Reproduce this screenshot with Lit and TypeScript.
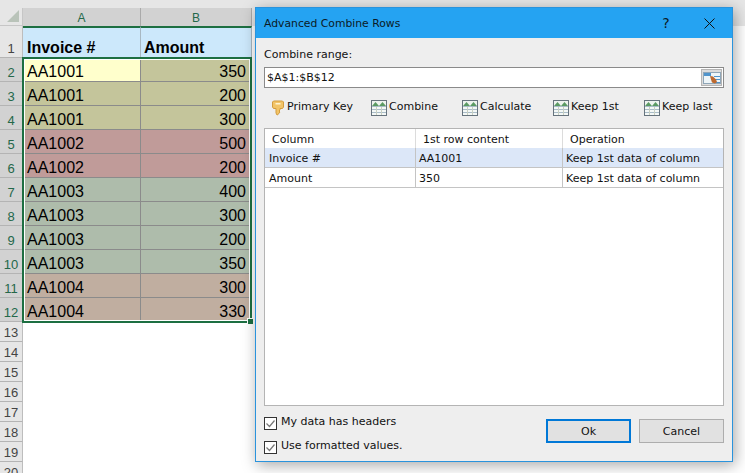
import { LitElement, html, css, svg } from 'lit';
import { customElement } from 'lit/decorators.js';

const ROWS: [string, string, string, string][] = [
  ['AA1001', '350', '#ffffcc', '#c4c59b'],
  ['AA1001', '200', '#c4c59b', '#c4c59b'],
  ['AA1001', '300', '#c4c59b', '#c4c59b'],
  ['AA1002', '500', '#c09b99', '#c09b99'],
  ['AA1002', '200', '#c09b99', '#c09b99'],
  ['AA1003', '400', '#aebcab', '#aebcab'],
  ['AA1003', '300', '#aebcab', '#aebcab'],
  ['AA1003', '200', '#aebcab', '#aebcab'],
  ['AA1003', '350', '#aebcab', '#aebcab'],
  ['AA1004', '300', '#c0aea0', '#c0aea0'],
  ['AA1004', '330', '#c0aea0', '#c0aea0'],
];

const tableIcon = svg`<svg width="16" height="16" viewBox="0 0 16 16">
  <rect x="0.500" y="0.500" width="15" height="15" fill="#f4f8f6" stroke="#66737d"/>
  <rect x="1" y="1" width="14" height="5" fill="#eef3ef"/>
  <path d="M1 6l3.500-4 3.500 4zM8 6l3.500-4 3.500 4z" fill="#5a9a63"/>
  <path d="M1 6.500h14M1 9.500h14M1 12.500h14" stroke="#a9bcc8"/>
  <path d="M5.500 7v8M10.500 7v8" stroke="#c9d0c2"/>
</svg>`;

const keyIcon = svg`<svg width="12" height="16" viewBox="0 0 12 16">
  <path d="M1.500 1h9l1 1v5l-1 1.500H8v1.500l-1 1 1 1-2.500 3H5L4 13V8.500H1.500L.5 7V2z" fill="#f2c467" stroke="#d39c3f"/>
  <rect x="3.500" y="3" width="5" height="1.500" fill="#fff3cf"/>
</svg>`;

const rangeIcon = svg`<svg width="18" height="14" viewBox="0 0 18 14">
  <rect x="0.500" y="1.500" width="17" height="11" fill="#eef5f8" stroke="#8fa6b8"/>
  <rect x="1" y="2" width="7" height="3" fill="#4f94cc"/>
  <path d="M11 5.500h6M11 8.500h6M11 11.500h6" stroke="#4f94cc"/>
  <path d="M7 5l3 .5 3 3 1 2.500-2 1.500-3-1-1-3z" fill="#bd6a30"/>
</svg>`;

@customElement('app-root')
export class AppRoot extends LitElement {
  static styles = css`
    :host {
      display: block;
      position: relative;
      width: 745px;
      height: 473px;
      overflow: hidden;
      background: #fff;
      font-family: 'Liberation Sans', sans-serif;
    }
    .top {
      height: 8px;
      background: #e6e6e6;
    }
    .sheet {
      display: grid;
      grid-template-columns: 23px 118px 111px 1fr;
      grid-template-rows: 18px 32px repeat(11, 24px) repeat(8, 20px);
      height: 465px;
      overflow: hidden;
    }
    .corner {
      background: #e6e6e6;
      border-right: 1px solid #c6c6c6;
      border-bottom: 1px solid #c6c6c6;
      box-sizing: border-box;
      display: flex;
      align-items: flex-end;
      justify-content: flex-end;
      padding: 0 3px 3px 0;
    }
    .tri {
      width: 0;
      height: 0;
      border-left: 12px solid transparent;
      border-bottom: 12px solid #b9c3b9;
    }
    .col {
      background: #d2d2d2;
      color: #24684a;
      font-size: 12px;
      display: flex;
      align-items: center;
      justify-content: center;
      border-right: 1px solid #aaa;
      box-sizing: border-box;
      padding-top: 1px;
    }
    .rest {
      background: #e6e6e6;
    }
    .rh {
      background: #e6e6e6;
      color: #444;
      font-size: 13px;
      border-bottom: 1px solid #b4b4b4;
      border-right: 1px solid #bdbdbd;
      box-sizing: border-box;
      display: flex;
      align-items: flex-end;
      justify-content: center;
      padding-bottom: 1px;
    }
    .rh.sel {
      background: #d2d2d2;
      color: #24684a;
    }
    .cell {
      font-size: 16px;
      color: #000;
      box-sizing: border-box;
      border-right: 1px solid #8b8b8b;
      border-bottom: 1px solid #8b8b8b;
      padding: 4px 5px 0 4px;
      display: flex;
      align-items: center;
      white-space: nowrap;
    }
    .cell.num {
      justify-content: flex-end;
    }
    .head {
      background: #cce8fb;
      font-weight: bold;
      align-items: flex-end;
      padding-top: 0;
      padding-bottom: 0;
      border-color: #a8b8c2;
      border-top: 2px solid #1d6f42;
    }
    .head.second {
      padding-left: 3px;
    }
    .selection {
      position: absolute;
      left: 22px;
      top: 57px;
      width: 230px;
      height: 266px;
      box-sizing: border-box;
      border: 2px solid #1d6f42;
      box-shadow: inset 0 0 0 1px #fff;
      pointer-events: none;
    }
    .handle {
      position: absolute;
      right: -3px;
      bottom: -3px;
      width: 5px;
      height: 5px;
      background: #1d6f42;
      border-left: 1px solid #fff;
      border-top: 1px solid #fff;
    }
    .dialog {
      position: absolute;
      left: 255px;
      top: 7px;
      width: 478px;
      height: 455px;
      box-sizing: border-box;
      background: #eeeeee;
      border: 1px solid #2a93dc;
      box-shadow: 2px 3px 14px rgba(0, 0, 0, 0.35);
      display: flex;
      flex-direction: column;
      font-family: 'DejaVu Sans', sans-serif;
      font-size: 11px;
      color: #111;
    }
    .title {
      height: 30px;
      flex: none;
      background: #25a3f2;
      display: flex;
      align-items: center;
      padding: 0 0 0 8px;
      color: #0b1a26;
      font-size: 10.800px;
    }
    .title span {
      flex: 1;
    }
    .help {
      width: 20px;
      text-align: center;
      font-size: 14px;
      margin-right: 28px;
    }
    .close {
      margin-right: 17px;
      display: block;
    }
    .body {
      flex: 1;
      display: flex;
      flex-direction: column;
      padding: 10px 8px 0;
    }
    .label {
      height: 19px;
    }
    .input {
      height: 21px;
      box-sizing: border-box;
      background: #fff;
      border: 1px solid #8a8a8a;
      display: flex;
      align-items: center;
      justify-content: space-between;
      padding: 0 1px 0 2px;
    }
    .pick {
      width: 21px;
      height: 17px;
      box-sizing: border-box;
      background: #dcdcdc;
      border: 1px solid #b5b5b5;
      display: flex;
      align-items: center;
      justify-content: center;
    }
    .toolbar {
      height: 40px;
      display: flex;
      align-items: center;
    }
    .tool {
      display: flex;
      flex: none;
      align-items: center;
      gap: 2px;
      white-space: nowrap;
      width: 91px;
    }
    .tool:last-child {
      width: auto;
    }
    .tool span {
      margin-top: -3px;
    }
    .tool.key {
      gap: 3px;
      margin-left: 8px;
      width: 99px;
    }
    .list {
      flex: none;
      height: 278px;
      box-sizing: border-box;
      background: #fff;
      border: 1px solid #b4b4b4;
    }
    .tr {
      display: grid;
      grid-template-columns: 151px 147px 1fr;
      height: 20px;
      box-sizing: border-box;
      align-items: center;
      border-bottom: 1px solid #c4c4c4;
    }
    .tr > div {
      height: 100%;
      display: flex;
      align-items: center;
      padding: 2px 0 0 3px;
      box-sizing: border-box;
      border-right: 1px solid #c4c4c4;
      white-space: nowrap;
    }
    .tr > div:first-child {
      padding-left: 4px;
    }
    .tr > div:last-child {
      border-right: none;
    }
    .tr.hd {
      border-bottom: none;
      height: 19px;
    }
    .tr.hd > div {
      padding-left: 7px;
      border-color: #dcdcdc;
    }
    .tr.on {
      background: #dce7f8;
    }
    .foot {
      flex: 1;
      display: flex;
      justify-content: space-between;
      align-items: flex-start;
    }
    .checks {
      display: flex;
      flex-direction: column;
      gap: 11px;
      padding-top: 9px;
    }
    .check {
      display: flex;
      align-items: center;
      gap: 4px;
      height: 13px;
    }
    .box {
      display: block;
      flex: none;
      margin-top: 3px;
    }
    .buttons {
      display: flex;
      gap: 8px;
      padding-top: 13px;
    }
    .btn {
      width: 85px;
      height: 24px;
      box-sizing: border-box;
      background: #e1e1e1;
      border: 1px solid #adadad;
      display: flex;
      align-items: center;
      justify-content: center;
    }
    .btn.primary {
      border: 2px solid #0078d7;
    }
  `;

  render() {
    const box = svg`<svg class="box" width="13" height="13" viewBox="0 0 13 13">
      <rect x="0.500" y="0.500" width="12" height="12" fill="#fff" stroke="#333"/>
      <path d="M2.500 6.500l3 3 5-6" fill="none" stroke="#777" stroke-width="1.200"/>
    </svg>`;
    return html`
      <div class="top"></div>
      <div class="sheet">
        <div class="corner"><div class="tri"></div></div>
        <div class="col">A</div>
        <div class="col">B</div>
        <div class="rest"></div>

        <div class="rh">1</div>
        <div class="cell head">Invoice #</div>
        <div class="cell head second">Amount</div>
        <div></div>

        ${ROWS.map(
          (r, i) => html`
            <div class="rh sel">${i + 2}</div>
            <div class="cell" style="background:${r[2]}">${r[0]}</div>
            <div class="cell num" style="background:${r[3]}">${r[1]}</div>
            <div></div>
          `
        )}
        ${[13, 14, 15, 16, 17, 18, 19, 20].map(
          (n) => html`
            <div class="rh">${n}</div>
            <div></div>
            <div></div>
            <div></div>
          `
        )}
      </div>
      <div class="selection"><div class="handle"></div></div>

      <div class="dialog">
        <div class="title">
          <span>Advanced Combine Rows</span>
          <div class="help">?</div>
          <svg class="close" width="11" height="11" viewBox="0 0 11 11">
            <path d="M.5.500l10 10M10.500.500l-10 10" stroke="#111" fill="none"/>
          </svg>
        </div>
        <div class="body">
          <div class="label">Combine range:</div>
          <div class="input">
            <span>$A$1:$B$12</span>
            <div class="pick">${rangeIcon}</div>
          </div>
          <div class="toolbar">
            <div class="tool key">${keyIcon}<span>Primary Key</span></div>
            <div class="tool">${tableIcon}<span>Combine</span></div>
            <div class="tool">${tableIcon}<span>Calculate</span></div>
            <div class="tool">${tableIcon}<span>Keep 1st</span></div>
            <div class="tool">${tableIcon}<span>Keep last</span></div>
          </div>
          <div class="list">
            <div class="tr hd">
              <div>Column</div>
              <div>1st row content</div>
              <div>Operation</div>
            </div>
            <div class="tr on">
              <div>Invoice #</div>
              <div>AA1001</div>
              <div>Keep 1st data of column</div>
            </div>
            <div class="tr">
              <div>Amount</div>
              <div>350</div>
              <div>Keep 1st data of column</div>
            </div>
          </div>
          <div class="foot">
            <div class="checks">
              <div class="check">${box}<span>My data has headers</span></div>
              <div class="check">${box}<span>Use formatted values.</span></div>
            </div>
            <div class="buttons">
              <div class="btn primary">Ok</div>
              <div class="btn">Cancel</div>
            </div>
          </div>
        </div>
      </div>
    `;
  }
}
